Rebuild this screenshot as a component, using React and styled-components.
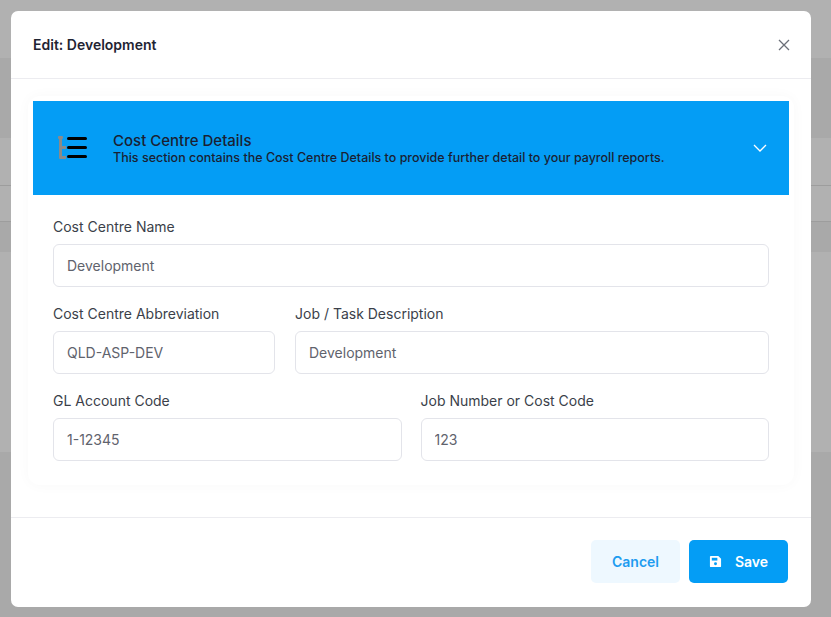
import React from "react";
import styled, { createGlobalStyle } from "styled-components";

const Global = createGlobalStyle`
  html, body { margin: 0; padding: 0; }
  body { font-family: Inter, "Noto Sans", sans-serif; background: #b1b1b1; }
  * { box-sizing: border-box; }
`;

const Backdrop = styled.div`
  width: 831px; height: 617px; position: relative; overflow: hidden;
  background: #b1b1b1; display: flex; flex-direction: column;
`;
const Band = styled.div`
  height: ${p => p.h}px; background: ${p => p.bg || "transparent"};
  border-bottom: ${p => (p.line ? "1px solid #9d9d9d" : "none")};
`;

const Modal = styled.div`
  position: absolute; left: 11px; top: 11px; width: 800px; height: 596px;
  background: #fff; border-radius: 7px; display: flex; flex-direction: column;
`;
const Header = styled.div`
  height: 68px; border-bottom: 1px solid #ececf0; display: flex; align-items: center;
  justify-content: space-between; padding: 0 22px;
`;
const Title = styled.h2`
  margin: 0; font-size: 14px; font-weight: 600; color: #1f2433;
`;
const Close = styled.button`
  border: 0; background: none; padding: 0; display: flex; color: #6b6f78; cursor: pointer; margin-right: -2px;
`;
const Body = styled.div`
  flex: 1; padding: 17px 17px 20px;
`;
const Card = styled.div`
  border-radius: 12px; padding: 5px 5px 24px;
  box-shadow: 0 0 14px rgba(0,0,0,0.03);
`;
const Banner = styled.div`
  background: #049df5; height: 94px; display: flex; align-items: center; padding: 0 22px 0 25px;
`;
const BannerText = styled.div`
  flex: 1; margin-left: 25px; color: #1a1f33; margin-top: 2px;
`;
const BannerTitle = styled.div`font-size: 15px; font-weight: 500; line-height: 18px;`;
const BannerSub = styled.div`font-size: 12.5px; font-weight: 500; line-height: 16px;`;

const Fields = styled.div`
  padding: 23px 20px 0; display: flex; flex-direction: column; gap: 18px;
`;
const Row = styled.div`
  display: grid; grid-template-columns: ${p => p.cols || "1fr"}; column-gap: ${p => p.gap || 20}px;
`;
const Field = styled.label`display: flex; flex-direction: column; gap: 9px;`;
const Label = styled.span`font-size: 14px; color: #3b3f4a; line-height: 17px;`;
const Input = styled.input`
  height: 43px; border: 1px solid #e3e4ea; border-radius: 6px; padding: 0 13px;
  font: inherit; font-size: 14px; color: #5f636d; background: #fff; outline: none;
`;

const Footer = styled.div`
  height: 90px; border-top: 1px solid #ececf0; display: flex; align-items: center;
  justify-content: flex-end; gap: 9px; padding: 0 23px 2px 0;
`;
const Btn = styled.button`
  height: 43px; border: 0; border-radius: 5px; font: inherit; font-size: 14px; font-weight: 600;
  display: flex; align-items: center; justify-content: center; gap: 13px; cursor: pointer;
  width: ${p => p.w}px;
  background: ${p => (p.primary ? "#049df5" : "#eef8ff")};
  color: ${p => (p.primary ? "#fff" : "#1d9cf0")};
`;

const TreeIcon = () => (
  <svg width="30" height="26" viewBox="0 0 30 26">
    <g fill="#8a8a8a">
      <rect x="1" y="2" width="3" height="22" rx="1" />
      <rect x="3" y="11" width="5" height="3" />
      <rect x="3" y="21" width="5" height="3" />
      <rect x="0" y="1" width="5" height="3" rx="1" />
    </g>
    <g fill="#000">
      <rect x="9" y="2" width="20" height="3" rx="1.5" />
      <rect x="9" y="11" width="20" height="3" rx="1.5" />
      <rect x="9" y="20" width="20" height="3" rx="1.5" />
    </g>
  </svg>
);

export default function App() {
  return (
    <>
      <Global />
      <Backdrop>
        <Band h={58} />
        <Band h={80} bg="#a9a9a9" />
        <Band h={48} line />
        <Band h={36} line />
        <Band h={30} bg="#a9a9a9" />
        <Band h={200} />
        <Band h={165} bg="#a9a9a9" />
        <Modal>
          <Header>
            <Title>Edit: Development</Title>
            <Close aria-label="close">
              <svg width="14" height="14" viewBox="0 0 14 14" stroke="currentColor" strokeWidth="1.3">
                <path d="M2 2l10 10M12 2L2 12" />
              </svg>
            </Close>
          </Header>
          <Body>
            <Card>
              <Banner>
                <TreeIcon />
                <BannerText>
                  <BannerTitle>Cost Centre Details</BannerTitle>
                  <BannerSub>This section contains the Cost Centre Details to provide further detail to your payroll reports.</BannerSub>
                </BannerText>
                <svg width="14" height="8" viewBox="0 0 14 8" fill="none" stroke="#fff" strokeWidth="1.3">
                  <path d="M1 1l6 6 6-6" />
                </svg>
              </Banner>
              <Fields>
                <Row>
                  <Field><Label>Cost Centre Name</Label><Input defaultValue="Development" /></Field>
                </Row>
                <Row cols="222px 1fr">
                  <Field><Label>Cost Centre Abbreviation</Label><Input defaultValue="QLD-ASP-DEV" /></Field>
                  <Field><Label>Job / Task Description</Label><Input defaultValue="Development" /></Field>
                </Row>
                <Row cols="1fr 1fr" gap={19}>
                  <Field><Label>GL Account Code</Label><Input defaultValue="1-12345" /></Field>
                  <Field><Label>Job Number or Cost Code</Label><Input defaultValue="123" /></Field>
                </Row>
              </Fields>
            </Card>
          </Body>
          <Footer>
            <Btn w={89}>Cancel</Btn>
            <Btn primary w={99}>
              <svg width="13" height="13" viewBox="0 0 14 14" fill="#fff">
                <path d="M1 2a1 1 0 0 1 1-1h8l3 3v8a1 1 0 0 1-1 1H2a1 1 0 0 1-1-1z" />
                <rect x="3" y="3" width="6" height="3" fill="#049df5" />
                <circle cx="7" cy="9.5" r="1.6" fill="#049df5" />
              </svg>
              Save
            </Btn>
          </Footer>
        </Modal>
      </Backdrop>
    </>
  );
}
